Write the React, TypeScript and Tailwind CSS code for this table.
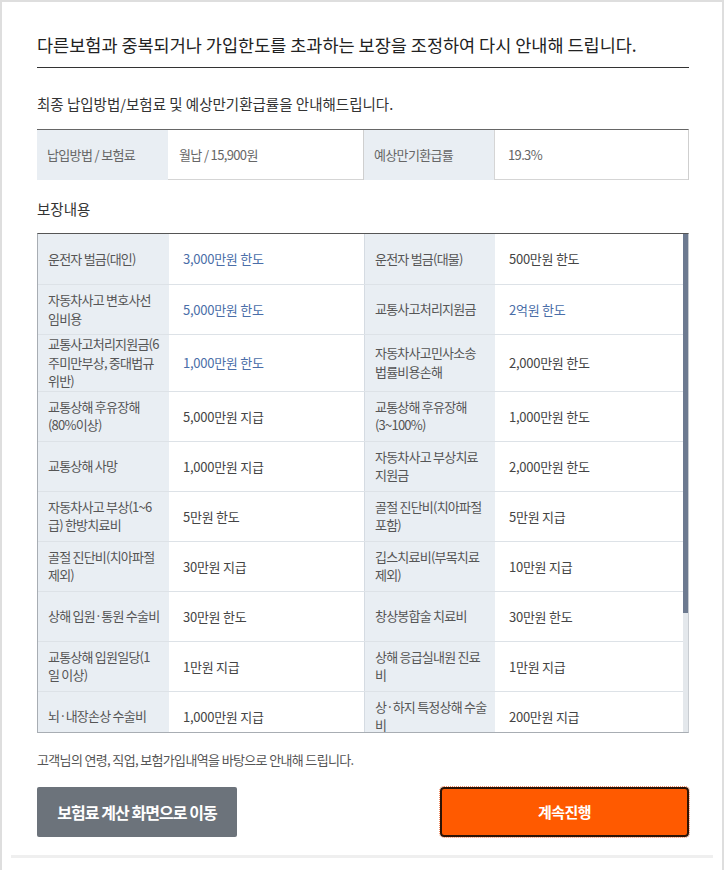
const font = { fontFamily: '"Noto Sans CJK KR", "Noto Sans", sans-serif' };

type Cell = { label: string[]; value: string; blue?: boolean };

const rows: [Cell, Cell][] = [
  [
    { label: ["운전자 벌금(대인)"], value: "3,000만원 한도", blue: true },
    { label: ["운전자 벌금(대물)"], value: "500만원 한도" },
  ],
  [
    { label: ["자동차사고 변호사선", "임비용"], value: "5,000만원 한도", blue: true },
    { label: ["교통사고처리지원금"], value: "2억원 한도", blue: true },
  ],
  [
    { label: ["교통사고처리지원금(6", "주미만부상, 중대법규", "위반)"], value: "1,000만원 한도", blue: true },
    { label: ["자동차사고민사소송", "법률비용손해"], value: "2,000만원 한도" },
  ],
  [
    { label: ["교통상해 후유장해", "(80%이상)"], value: "5,000만원 지급" },
    { label: ["교통상해 후유장해", "(3~100%)"], value: "1,000만원 한도" },
  ],
  [
    { label: ["교통상해 사망"], value: "1,000만원 지급" },
    { label: ["자동차사고 부상치료", "지원금"], value: "2,000만원 한도" },
  ],
  [
    { label: ["자동차사고 부상(1~6", "급) 한방치료비"], value: "5만원 한도" },
    { label: ["골절 진단비(치아파절", "포함)"], value: "5만원 지급" },
  ],
  [
    { label: ["골절 진단비(치아파절", "제외)"], value: "30만원 지급" },
    { label: ["깁스치료비(부목치료", "제외)"], value: "10만원 지급" },
  ],
  [
    { label: ["상해 입원·통원 수술비"], value: "30만원 한도" },
    { label: ["창상봉합술 치료비"], value: "30만원 한도" },
  ],
  [
    { label: ["교통상해 입원일당(1", "일 이상)"], value: "1만원 지급" },
    { label: ["상해 응급실내원 진료", "비"], value: "1만원 지급" },
  ],
  [
    { label: ["뇌·내장손상 수술비"], value: "1,000만원 지급" },
    { label: ["상·하지 특정상해 수술", "비"], value: "200만원 지급" },
  ],
];

function Label({ lines, left }: { lines: string[]; left?: boolean }) {
  return (
    <div
      className={`w-[131px] shrink-0 bg-[#e9eef3] px-[10px] flex flex-col justify-center text-[#555] leading-[18.6px] ${left ? "border-l border-[#d5dbe2]" : ""}`}
    >
      {lines.map((l, i) => (
        <span key={i} className="whitespace-nowrap">
          {l}
        </span>
      ))}
    </div>
  );
}

export default function App() {
  return (
    <div className="w-[724px] h-[870px] bg-white border-t-2 border-x-2 border-[#dedede] flex flex-col" style={font}>
      <div className="px-[35px] pr-[33px]">
        {/* 제목 */}
        <h1 className="pt-[31px] pb-[10px] text-[17.5px] leading-[24px] text-[#222] border-b border-[#333]">
          다른보험과 중복되거나 가입한도를 초과하는 보장을 조정하여 다시 안내해 드립니다.
        </h1>

        <p className="mt-[26px] text-[14.5px] leading-[20px] text-[#333]">
          최종 납입방법/보험료 및 예상만기환급률을 안내해드립니다.
        </p>

        {/* 납입 요약 */}
        <div className="mt-[15px] flex h-[51px] border-t border-[#666] border-r border-r-[#cfcfcf] text-[13px] tracking-[-0.05em]">
          <div className="w-[131px] bg-[#e9eef3] pl-[10px] flex items-center text-[#666]">납입방법 / 보험료</div>
          <div className="w-[195px] border-b border-[#d5d5d5] pl-[11px] flex items-center text-[#666]">월납 / 15,900원</div>
          <div className="w-[131px] bg-[#e9eef3] border-l border-[#cfcfcf] pl-[10px] flex items-center text-[#666]">예상만기환급률</div>
          <div className="flex-1 border-b border-l border-[#d5d5d5] pl-[13px] flex items-center text-[#666]">19.3%</div>
        </div>

        <p className="mt-[19px] text-[14.5px] leading-[20px] text-[#333]">보장내용</p>

        {/* 보장 내용 */}
        <div className="mt-[14px] h-[500px] flex border-t border-t-[#555] border-l border-b border-[#a8adb3] border-r border-r-[#c8ccd1]">
          <div className="flex-1 overflow-hidden text-[13px] tracking-[-0.06em]">
            {rows.map(([a, b], i) => (
              <div key={i} className={`flex min-h-[50px] ${i > 0 ? "border-t border-[#dde2e7]" : ""}`}>
                <Label lines={a.label} />
                <div className={`w-[195px] shrink-0 pl-[14px] flex items-center tracking-[-0.02em] ${a.blue ? "text-[#4a6ea8]" : "text-[#444]"}`}>
                  {a.value}
                </div>
                <Label lines={b.label} left />
                <div className={`flex-1 pl-[14px] flex items-center tracking-[-0.02em] ${b.blue ? "text-[#4a6ea8]" : "text-[#444]"}`}>
                  {b.value}
                </div>
              </div>
            ))}
          </div>
          <div className="w-[5px] flex flex-col">
            <div className="h-[379px] bg-[#6d7a90]" />
            <div className="flex-1 bg-[#e4e8ec]" />
          </div>
        </div>

        <p className="mt-[17px] text-[13px] leading-[20px] tracking-[-0.05em] text-[#555]">
          고객님의 연령, 직업, 보험가입내역을 바탕으로 안내해 드립니다.
        </p>

        <div className="mt-[17px] flex justify-between">
          <button className="w-[200px] h-[50px] rounded-[2px] bg-[#6c737b] text-white text-[16px] font-bold tracking-[-0.06em]">
            보험료 계산 화면으로 이동
          </button>
          <button className="w-[249px] h-[50px] rounded-[4px] bg-[#ff5a00] border-2 border-[#2b1406] outline outline-1 outline-dotted outline-[#f08a60] text-white text-[15px] font-bold tracking-[-0.04em]">
            계속진행
          </button>
        </div>
      </div>

      <div className="mt-[18px] mx-[9px] h-[3px] bg-[#efefef]" />
    </div>
  );
}
